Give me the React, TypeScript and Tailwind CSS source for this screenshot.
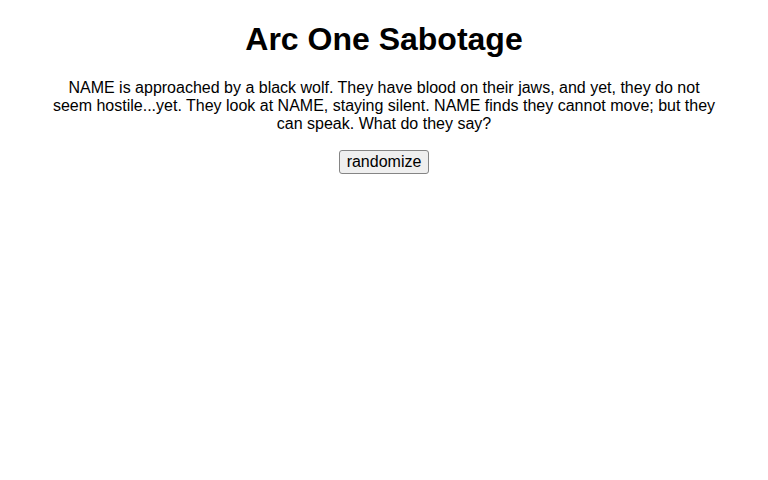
export default function App() {
  return (
    <div className="min-h-screen bg-white px-2 text-center text-black [font-family:'Liberation_Sans',Arial,sans-serif]">
      <h1 className="pt-[21px] text-[32px] font-bold leading-[37px]">Arc One Sabotage</h1>
      <p className="mx-auto mt-[21px] max-w-[668px] text-base leading-[18px]">
        NAME is approached by a black wolf. They have blood on their jaws, and yet, they do not
        seem hostile...yet. They look at NAME, staying silent. NAME finds they cannot move; but they
        can speak. What do they say?
      </p>
      <button className="mt-[17px] rounded-[3px] border border-[#858585] bg-[#efefef] px-[7px] py-[2px] text-base leading-[18px]">
        randomize
      </button>
    </div>
  );
}
